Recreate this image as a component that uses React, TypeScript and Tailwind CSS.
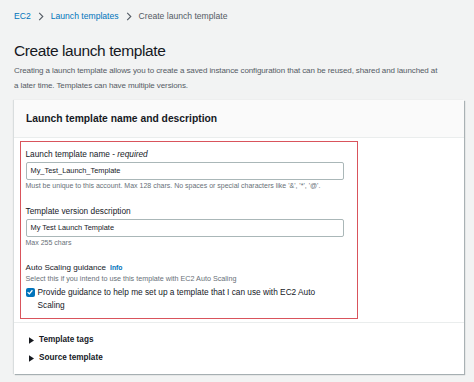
const FONT = { fontFamily: '"Liberation Sans", Arial, sans-serif' };

function Chevron() {
  return (
    <svg viewBox="0 0 6 10" className="mx-[7px] h-[9px] w-[6px] text-[#545b64]">
      <path d="M1 1l4 4-4 4" fill="none" stroke="currentColor" strokeWidth="1.2" />
    </svg>
  );
}

function Field({ label, value, hint }: { label: React.ReactNode; value: string; hint: string }) {
  return (
    <div className="flex flex-col">
      <div className="text-[8.3px] leading-[12px] text-[#16191f]">{label}</div>
      <div className="mt-[2px] h-[18px] w-[318px] rounded-[2px] border border-[#aab7b8] bg-white px-[4px] text-[7.4px] leading-[16px] text-[#16191f]">
        {value}
      </div>
      <div className="text-[7px] leading-[12px] text-[#687078]">{hint}</div>
    </div>
  );
}

function Expander({ title }: { title: string }) {
  return (
    <div className="flex h-[12px] items-center gap-[5px] pl-[15px]">
      <svg viewBox="0 0 6 8" className="h-[7px] w-[5px]">
        <path d="M0 0l6 4-6 4z" fill="#16191f" />
      </svg>
      <span className="text-[8.2px] font-bold text-[#16191f]">{title}</span>
    </div>
  );
}

export default function App() {
  return (
    <div className="h-[382px] w-[474px] overflow-hidden bg-[#f2f3f3] px-[14px]" style={FONT}>
      <nav className="flex h-[32px] items-center text-[8.6px] text-[#545b64]">
        <span className="text-[#0073bb]">EC2</span>
        <Chevron />
        <span className="text-[#0073bb]">Launch templates</span>
        <Chevron />
        <span className="font-medium text-[#545b64]">Create launch template</span>
      </nav>

      <h1 className="mt-[8px] text-[15.5px] leading-[22px] tracking-[-0.4px] text-[#16191f]">Create launch template</h1>
      <p className="mt-[1px] text-[8px] leading-[15px] tracking-[-0.1px] text-[#545b64]">
        Creating a launch template allows you to create a saved instance configuration that can be reused, shared and launched at
        <br />
        a later time. Templates can have multiple versions.
      </p>

      <section className="mt-[7px] w-[450px] bg-white shadow-[1px_1px_1px_0_rgba(0,28,36,0.3),-1px_0_1px_0_rgba(0,28,36,0.1)]">
        <header className="flex h-[38px] items-center border-b border-[#eaeded] bg-[#fafafa] px-[12px]">
          <h2 className="text-[10.3px] font-bold text-[#16191f]">Launch template name and description</h2>
        </header>

        <div className="ml-[6px] mt-[3px] w-[338px] border-[1.5px] border-[#d9545c] px-[4.5px] pb-[6.5px] pt-[5.5px]">
          <Field
            label={
              <>
                Launch template name - <i>required</i>
              </>
            }
            value="My_Test_Launch_Template"
            hint="Must be unique to this account. Max 128 chars. No spaces or special characters like '&', '*', '@'."
          />
          <div className="mt-[13px]">
            <Field label="Template version description" value="My Test Launch Template" hint="Max 255 chars" />
          </div>

          <div className="mt-[13px] flex items-center gap-[4px] text-[8.1px] leading-[12px] text-[#16191f]">
            Auto Scaling guidance
            <span className="text-[6.8px] font-bold text-[#0073bb]">Info</span>
          </div>
          <div className="text-[7.2px] leading-[10px] text-[#687078]">
            Select this if you intend to use this template with EC2 Auto Scaling
          </div>
          <div className="mt-[2px] flex items-start gap-[3px]">
            <span className="mt-[2px] flex h-[9px] w-[9px] shrink-0 items-center justify-center rounded-[2px] bg-[#0073bb]">
              <svg viewBox="0 0 10 10" className="h-[8px] w-[8px]">
                <path d="M2 5.2 4.2 7.3 8 2.8" fill="none" stroke="white" strokeWidth="1.6" />
              </svg>
            </span>
            <span className="text-[8.3px] leading-[13px] text-[#16191f]">
              Provide guidance to help me set up a template that I can use with EC2 Auto
              <br />
              Scaling
            </span>
          </div>
        </div>

        <div className="mt-[3px] border-t border-[#eaeded]" />
        <div className="flex flex-col gap-[6px] pb-[10px] pt-[11px]">
          <Expander title="Template tags" />
          <Expander title="Source template" />
        </div>
      </section>
    </div>
  );
}
